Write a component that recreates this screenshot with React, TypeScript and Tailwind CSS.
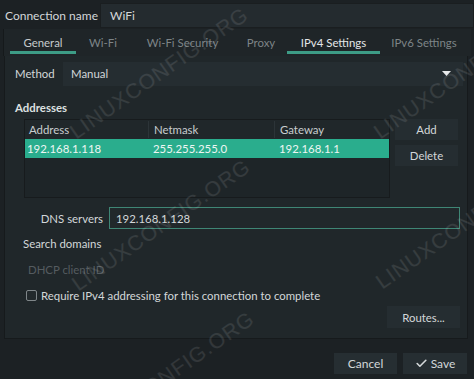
import { Check } from "lucide-react"

function Watermark({ className }: { className: string }) {
  return (
    <div
      className={`pointer-events-none absolute whitespace-nowrap font-['Liberation_Sans',sans-serif] text-[21px] tracking-[1px] text-white/10 origin-left ${className}`}
    >
      LINUXCONFIG.ORG
    </div>
  )
}

export default function App() {
  return (
    <div className="relative w-[474px] h-[379px] overflow-hidden whitespace-nowrap bg-[#1c2124] text-[11.4px] text-[#d3d7d9] font-['Lato',sans-serif]">
      <div className="flex items-center h-[29px] pt-[2px] text-[12px]">
        <div className="w-[100px] pl-[5px]">Connection name</div>
        <div className="flex-1 h-[25px] bg-[#242b2f] border border-[#1a1e20] flex items-center pl-[9px]">WiFi</div>
      </div>

      <div className="flex h-[27px] mx-[3px] bg-[#1f2528] border-l border-[#15191b] text-[#7d8487]">
        <div className="relative ml-[6px] w-[66px] flex items-center justify-center text-[#c5cacc]">
          General
          <div className="absolute left-0 right-0 bottom-[2px] h-[3px] bg-[#3d9c86]" />
        </div>
        <div className="w-[54px] flex items-center justify-center">Wi-Fi</div>
        <div className="w-[105px] flex items-center justify-center">Wi-Fi Security</div>
        <div className="w-[52px] flex items-center justify-center">Proxy</div>
        <div className="relative w-[93px] flex items-center justify-center text-[#e4e7e8]">
          IPv4 Settings
          <div className="absolute left-0 right-0 bottom-[2px] h-[3px] bg-[#3d9c86]" />
        </div>
        <div className="w-[88px] flex items-center justify-center">IPv6 Settings</div>
      </div>

      <div className="flex">
        <div className="ml-[4px] w-[464px] h-[283px] bg-[#20272a] border-l border-b border-r border-[#161a1c] flex flex-col">
          <div className="flex items-center mt-[6px] h-[24px]">
            <div className="w-[58px] pl-[10px]">Method</div>
            <div className="flex-1 h-[24px] mr-[4px] bg-[#252d31] flex items-center pl-[8px] justify-between pr-[12px]">
              Manual
              <svg width="9" height="6" viewBox="0 0 9 6">
                <path d="M0 0 L9 0 L4.5 5 Z" fill="#e8eaeb" />
              </svg>
            </div>
          </div>

          <div className="mt-[13px] pl-[10px] font-bold text-[#dde0e1]">Addresses</div>

          <div className="flex mt-[3px]">
            <div className="ml-[19px] w-[366px] h-[79px] bg-[#1e2528] border border-[#171b1d]">
              <div className="flex h-[19px] items-center text-[#c8cdcf] bg-[#20272a]">
                <div className="w-[124px] pl-[4px] border-r border-[#2c3438]">Address</div>
                <div className="w-[126px] pl-[5px] border-r border-[#2c3438]">Netmask</div>
                <div className="flex-1 pl-[5px]">Gateway</div>
              </div>
              <div className="flex h-[19px] items-center bg-[#2aad8d] text-[#eef6f3]">
                <div className="w-[124px] pl-[2px]">192.168.1.118</div>
                <div className="w-[126px] pl-[4px]">255.255.255.0</div>
                <div className="flex-1 pl-[4px]">192.168.1.1</div>
              </div>
            </div>
            <div className="flex flex-col gap-[5px] ml-[5px]">
              <div className="w-[63px] h-[21px] bg-[#252d31] flex items-center justify-center">Add</div>
              <div className="w-[63px] h-[21px] bg-[#252d31] flex items-center justify-center">Delete</div>
            </div>
          </div>

          <div className="flex items-center mt-[9px] h-[22px]">
            <div className="w-[104px] text-right pr-[6px]">DNS servers</div>
            <div className="w-[351px] h-[22px] border border-[#3f8675] bg-[#21282b] flex items-center pl-[6px]">
              192.168.1.128
            </div>
          </div>

          <div className="mt-[4px] pl-[18px] h-[20px] flex items-center">Search domains</div>
          <div className="mt-[6px] pl-[23px] h-[20px] flex items-center text-[#555c60]">DHCP client ID</div>

          <div className="mt-[6px] pl-[21px] h-[20px] flex items-center gap-[4px]">
            <div className="w-[11px] h-[11px] border border-[#7f8689] rounded-[2px] bg-[#22292c]" />
            <span>Require IPv4 addressing for this connection to complete</span>
          </div>

          <div className="flex justify-end mt-[1px] pr-[7px]">
            <div className="w-[73px] h-[22px] bg-[#252d31] flex items-center justify-center">Routes...</div>
          </div>
        </div>
      </div>

      <div className="flex justify-end gap-[6px] mt-[14px] pr-[7px] text-[12px]">
        <div className="w-[63px] h-[21px] bg-[#262e32] flex items-center justify-center">Cancel</div>
        <div className="w-[64px] h-[21px] bg-[#262e32] flex items-center justify-center gap-[3px]">
          <Check size={13} strokeWidth={3} />
          Save
        </div>
      </div>

      <Watermark className="left-[72px] top-[118px] -rotate-[35deg]" />
      <Watermark className="left-[376px] top-[118px] -rotate-[35deg]" />
      <Watermark className="left-[74px] top-[270px] -rotate-[35deg]" />
      <Watermark className="left-[378px] top-[268px] -rotate-[35deg]" />
      <Watermark className="left-[78px] top-[422px] -rotate-[35deg]" />
    </div>
  )
}
